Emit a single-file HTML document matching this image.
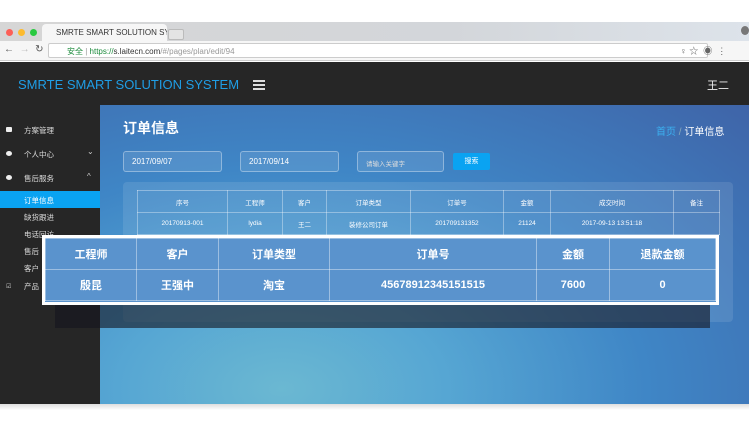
<!DOCTYPE html>
<html><head><meta charset="utf-8"><style>
*{margin:0;padding:0;box-sizing:border-box}
body{width:749px;height:422px;overflow:hidden;background:#fff;font-family:"Liberation Sans","Noto Sans CJK SC",sans-serif;position:relative}
.abs{position:absolute}
.tabs{left:0;top:22px;width:749px;height:19px;background:linear-gradient(90deg,#d6d6d6,#d3d6da 60%,#dde3ea)}
.dot{top:29px;width:7px;height:7px;border-radius:50%}
.tab{left:42px;top:24px;width:125px;height:17px;background:#f6f6f6;border-radius:4px 4px 0 0;font-size:8px;color:#333;padding:4px 0 0 14px;white-space:nowrap;overflow:hidden}
.addr{left:0;top:41px;width:749px;height:20px;background:#f6f6f6;border-bottom:1px solid #ccc}
.url{left:48px;top:43px;width:660px;height:15px;background:#fff;border:1px solid #ccc;border-radius:2px;font-size:8px;padding:2px 0 0 18px;color:#999}
.hdr{left:0;top:62px;width:749px;height:43px;background:#262626}
.side{left:0;top:105px;width:100px;height:299px;background:#262626}
.main{left:100px;top:105px;width:649px;height:299px;background:radial-gradient(ellipse at 28% 95%,#6bb8d2 0%,#56a6d3 25%,#3f86c6 55%,#3f64a8 100%)}
.si{font-size:7.5px;color:#ddd;left:24px}
table{border-collapse:collapse;position:absolute;table-layout:fixed}
td{border:1px solid rgba(255,255,255,.35);text-align:center;color:#fff;white-space:nowrap;overflow:hidden;vertical-align:middle}
.st td{font-size:6.5px;height:22px}
.bt td{font-size:11px;font-weight:bold;height:31px;border-color:rgba(255,255,255,.4)}
.inp{top:151px;height:21px;border:1px solid rgba(255,255,255,.35);border-radius:3px;background:rgba(255,255,255,.1);color:#fff;font-size:8px;padding:5px 0 0 8px}
</style></head><body>
<div class="abs tabs"></div>
<div class="abs dot" style="left:6px;background:#fc5f57"></div>
<div class="abs dot" style="left:18px;background:#fdbb2e"></div>
<div class="abs dot" style="left:30px;background:#29c940"></div>
<div class="abs tab">SMRTE SMART SOLUTION SY ✕</div>
<div class="abs" style="left:168px;top:29px;width:16px;height:11px;background:#e4e4e4;border:1px solid #bbb;border-radius:2px"></div>
<div class="abs" style="left:0;top:0;width:749px;height:22px;background:#fff"></div>
<div class="abs addr"></div>
<div class="abs" style="left:4px;top:44px;font-size:10px;color:#555">←&nbsp;&nbsp;<span style="color:#bbb">→</span>&nbsp;&nbsp;↻</div>
<div class="abs url"><span style="color:#1a8a3a">安全</span> | <span style="color:#1a8a3a">https://</span><span style="color:#333">s.laitecn.com</span>/#/pages/plan/edit/94</div>
<div class="abs" style="left:680px;top:44px;font-size:9px;color:#666">♀ ☆ &nbsp;◉ &nbsp;⋮</div>
<div class="abs" style="left:741px;top:26px;width:8px;height:9px;border-radius:50%;background:#777"></div>
<div class="abs hdr"></div>
<div class="abs" style="left:18px;top:77px;font-size:13px;color:#1f9ee6;white-space:nowrap">SMRTE SMART SOLUTION SYSTEM</div>
<div class="abs" style="left:253px;top:80px;width:12px;height:2px;background:#ddd;box-shadow:0 4px 0 #ddd,0 8px 0 #ddd"></div>
<div class="abs" style="left:707px;top:77px;font-size:11px;color:#eee">王二</div>
<div class="abs side"></div>
<div class="abs si" style="top:125px">方案管理</div>
<div class="abs si" style="top:149px">个人中心</div>
<div class="abs si" style="top:173px">售后服务</div>
<div class="abs" style="left:6px;top:127px;width:6px;height:5px;background:#eee;border-radius:1px"></div>
<div class="abs" style="left:6px;top:151px;width:6px;height:5px;background:#eee;border-radius:50%"></div>
<div class="abs" style="left:6px;top:175px;width:6px;height:5px;background:#eee;border-radius:50%"></div>
<div class="abs" style="left:87px;top:147px;font-size:8px;color:#ccc">⌄</div>
<div class="abs" style="left:87px;top:172px;font-size:8px;color:#ccc">^</div>
<div class="abs" style="left:0;top:191px;width:100px;height:17px;background:#0aa3f2"></div>
<div class="abs si" style="top:195px;color:#fff">订单信息</div>
<div class="abs si" style="top:212px">缺货跟进</div>
<div class="abs si" style="top:229px">电话回访</div>
<div class="abs si" style="top:246px">售后</div>
<div class="abs si" style="top:263px">客户</div>
<div class="abs si" style="top:281px">产品</div>
<div class="abs" style="left:6px;top:283px;font-size:6px;color:#ccc">☑</div>
<div class="abs main"></div>
<div class="abs" style="left:123px;top:118px;font-size:14px;font-weight:bold;color:#fff">订单信息</div>
<div class="abs" style="left:656px;top:123px;font-size:10px;color:#3bb0f0">首页 <span style="color:#8ab">/</span> <span style="color:#fff">订单信息</span></div>
<div class="abs inp" style="left:123px;width:99px">2017/09/07</div>
<div class="abs inp" style="left:240px;width:99px">2017/09/14</div>
<div class="abs inp" style="left:357px;width:87px;font-size:6.5px;padding-top:6px;color:#ddd">请输入关键字</div>
<div class="abs" style="left:453px;top:153px;width:37px;height:17px;background:#0aa3f2;border-radius:2px;color:#fff;font-size:7px;text-align:center;line-height:17px">搜索</div>
<div class="abs" style="left:123px;top:182px;width:610px;height:140px;background:rgba(255,255,255,.1);border-radius:4px"></div>
<table class="st" style="left:137px;top:190px;width:583px">
<tr><td style="width:90px">序号</td><td style="width:55px">工程师</td><td style="width:44px">客户</td><td style="width:84px">订单类型</td><td style="width:93px">订单号</td><td style="width:47px">金额</td><td style="width:123px">成交时间</td><td>备注</td></tr>
<tr><td>20170913-001</td><td>lydia</td><td>王二</td><td>装修公司订单</td><td>201709131352</td><td>21124</td><td>2017-09-13 13:51:18</td><td></td></tr>
</table>
<div class="abs" style="left:55px;top:300px;width:655px;height:28px;background:rgba(20,20,30,.6)"></div>
<div class="abs" style="left:42px;top:235px;width:677px;height:70px;border:3px solid #fff;background:#5a93cd"></div>
<table class="bt" style="left:45px;top:238px;width:671px">
<tr><td style="width:91px">工程师</td><td style="width:82px">客户</td><td style="width:111px">订单类型</td><td style="width:207px">订单号</td><td style="width:73px">金额</td><td>退款金额</td></tr>
<tr><td>殷昆</td><td>王强中</td><td>淘宝</td><td>45678912345151515</td><td>7600</td><td>0</td></tr>
</table>
<div class="abs" style="left:0;top:404px;width:749px;height:6px;background:linear-gradient(#ddd,#fff)"></div>
</body></html>
